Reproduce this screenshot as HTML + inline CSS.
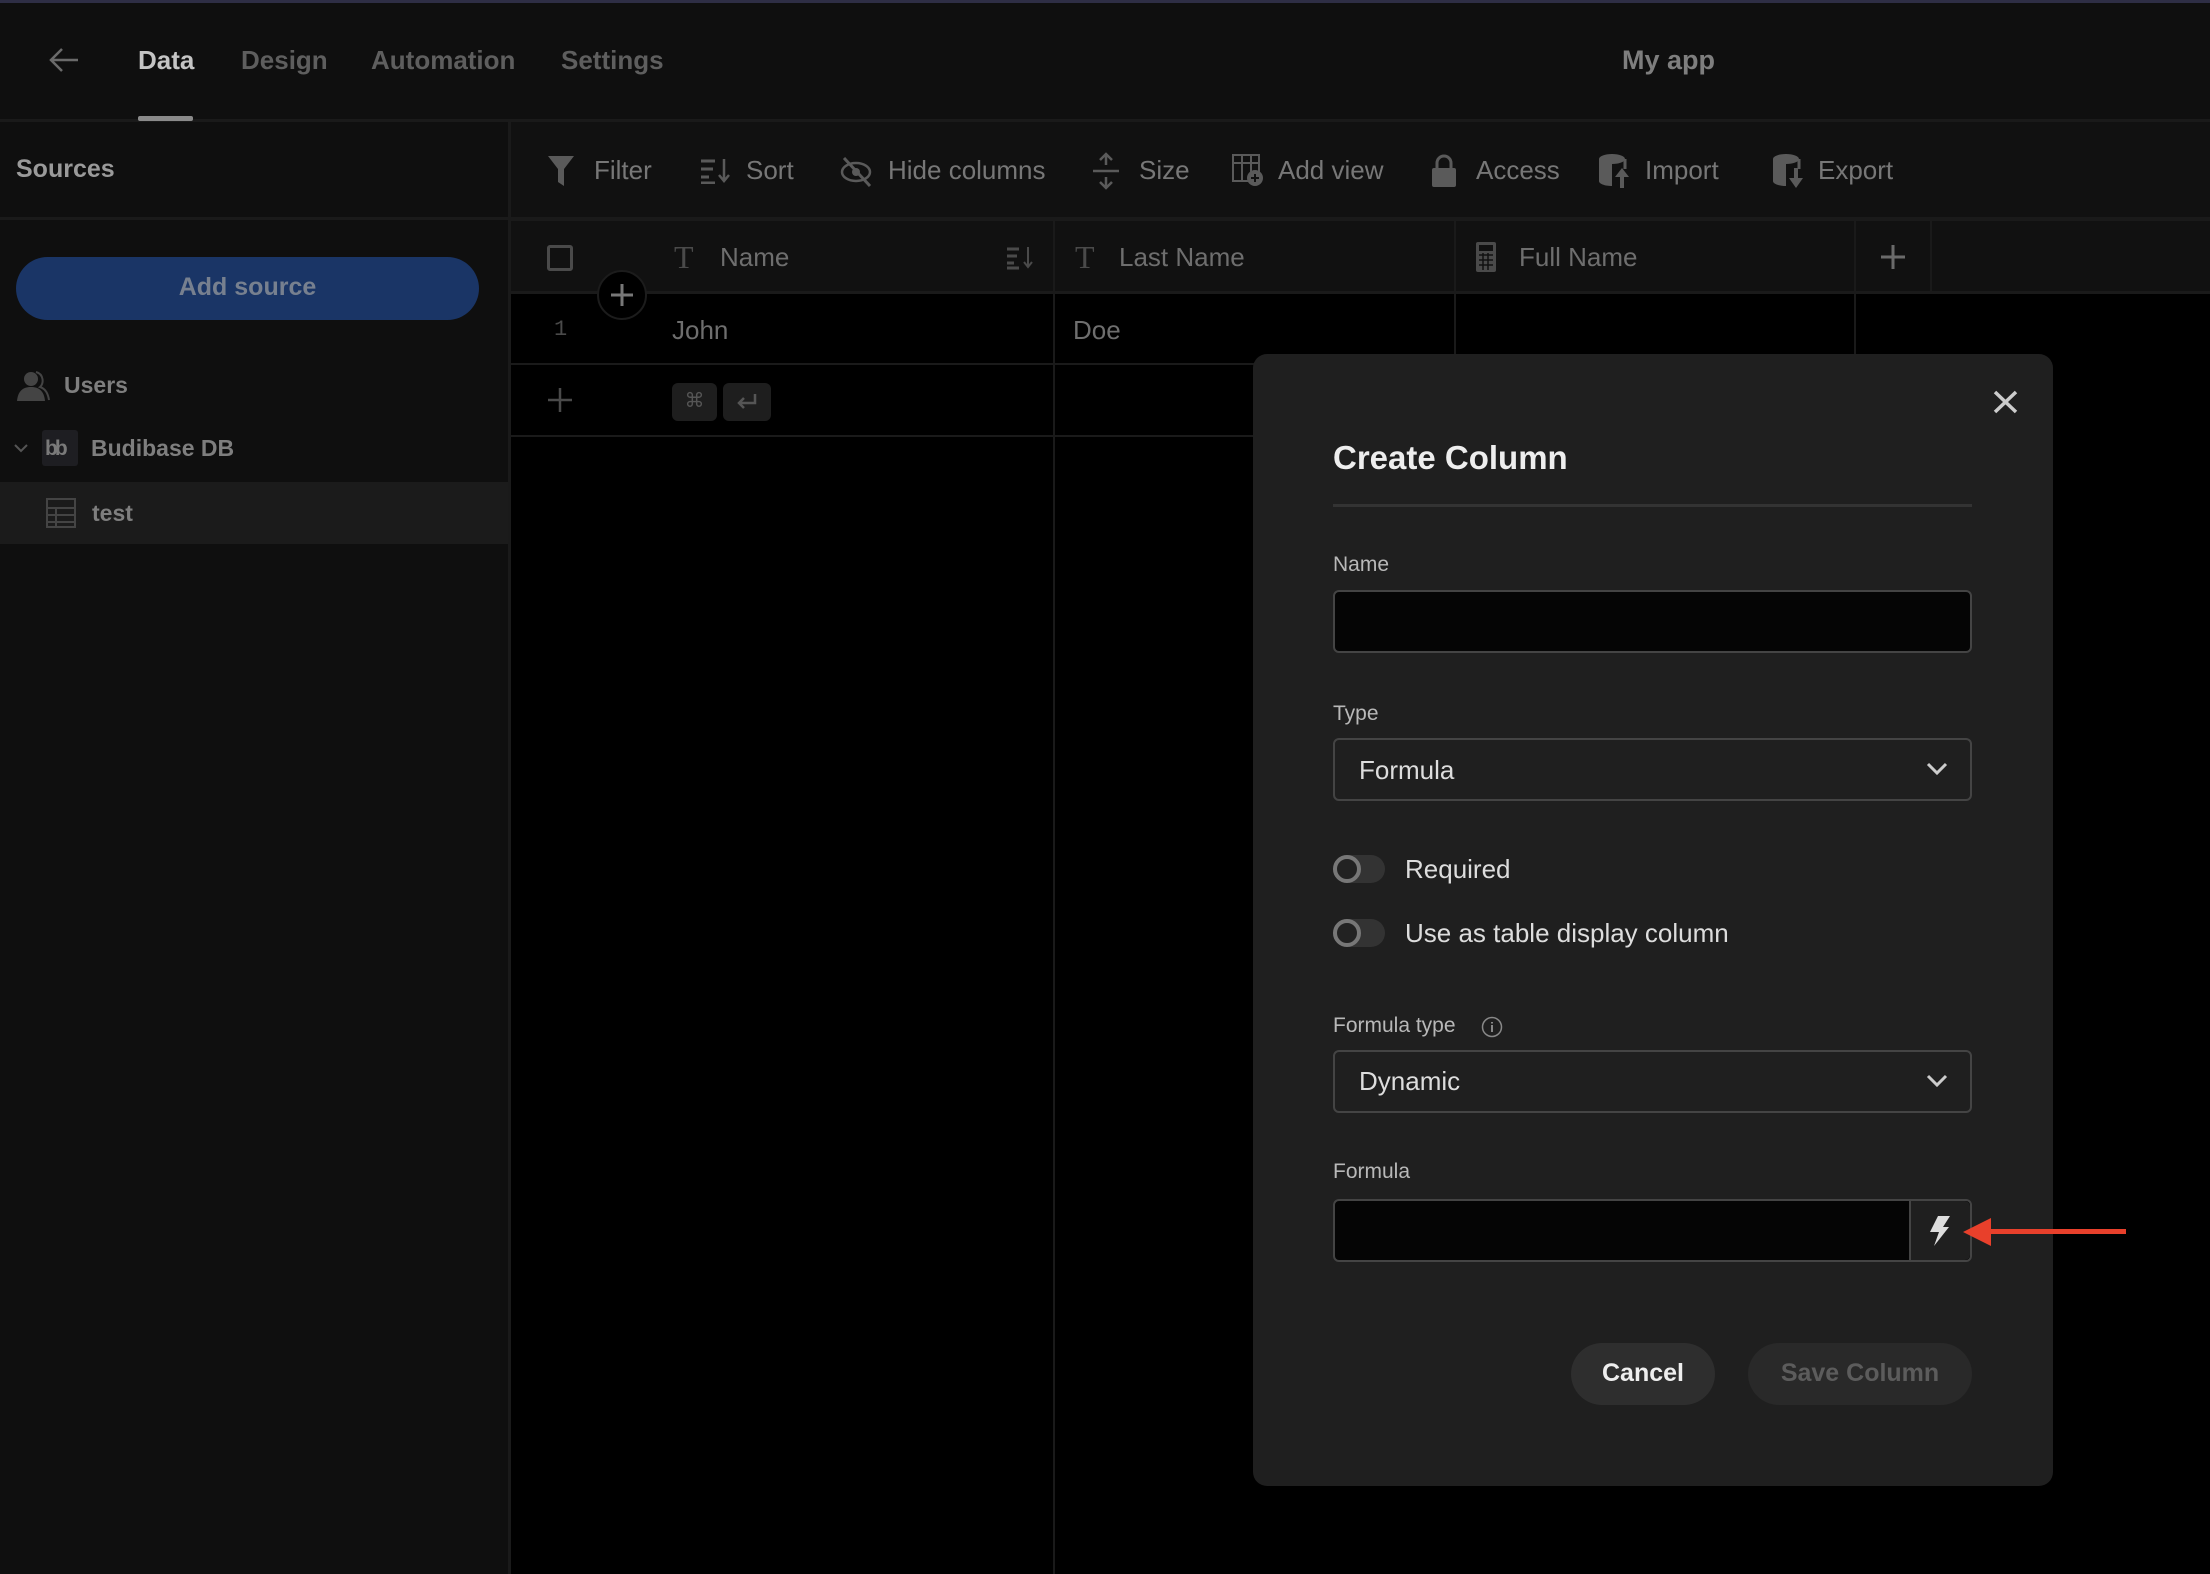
<!DOCTYPE html>
<html><head><meta charset="utf-8"><style>
*{box-sizing:border-box;margin:0;padding:0}
body{width:2210px;height:1574px;background:#000;font-family:"Liberation Sans",sans-serif;position:relative;overflow:hidden}
.a{position:absolute}
.t{position:absolute;white-space:nowrap;line-height:1}
</style></head><body>
<div class="a" style="left:0;top:0;width:2210px;height:3px;background:#2e2e45"></div>
<div class="a" style="left:0;top:3px;width:2210px;height:117px;background:#0f0f0f"></div>
<div class="a" style="left:0;top:119px;width:2210px;height:3px;background:#1a1a1a"></div>
<svg class="a" style="left:48px;top:46px" width="32" height="28" viewBox="0 0 32 28"><path d="M14 3 L3 14 L14 25 M3 14 H30" stroke="#6a6a6a" stroke-width="2.5" fill="none"/></svg>
<div class="t" style="left:138px;top:47px;font-size:26px;font-weight:bold;color:#c4c4c4">Data</div>
<div class="a" style="left:138px;top:116px;width:55px;height:5px;background:#8a8a8a;border-radius:2px"></div>
<div class="t" style="left:241px;top:47px;font-size:26px;font-weight:bold;color:#5e5e5e">Design</div>
<div class="t" style="left:371px;top:47px;font-size:26px;font-weight:bold;color:#5e5e5e">Automation</div>
<div class="t" style="left:561px;top:47px;font-size:26px;font-weight:bold;color:#5e5e5e">Settings</div>
<div class="t" style="left:1622px;top:47px;font-size:27px;font-weight:bold;color:#7e7e7e">My app</div>

<div class="a" style="left:0;top:122px;width:508px;height:1452px;background:#0f0f0f"></div>
<div class="a" style="left:508px;top:122px;width:3px;height:1452px;background:#1a1a1a"></div>
<div class="a" style="left:0;top:217px;width:510px;height:3px;background:#1a1a1a"></div>
<div class="t" style="left:16px;top:157px;font-size:25px;font-weight:bold;color:#9a9a9a">Sources</div>
<div class="a" style="left:16px;top:257px;width:463px;height:63px;background:#1a3566;border-radius:32px"></div>
<div class="t" style="left:16px;top:275px;width:463px;text-align:center;font-size:25px;font-weight:bold;color:#77808f">Add source</div>
<svg class="a" style="left:16px;top:370px" width="34" height="32" viewBox="0 0 34 32"><circle cx="15" cy="9" r="7" fill="#444"/><path d="M1 31 C2 20 8 17 15 17 C22 17 28 20 29 31Z" fill="#444"/><path d="M20 2 C28 4 28 14 24 17 C30 19 32 24 33 30" stroke="#444" stroke-width="2" fill="none"/></svg>
<div class="t" style="left:64px;top:374px;font-size:23px;font-weight:bold;color:#7e7e7e">Users</div>
<svg class="a" style="left:13px;top:442px" width="16" height="12" viewBox="0 0 16 12"><path d="M2 3 L8 9 L14 3" stroke="#555" stroke-width="2" fill="none"/></svg>
<div class="a" style="left:42px;top:430px;width:36px;height:36px;background:#1e1e22;border-radius:3px"></div>
<div class="t" style="left:45px;top:438px;font-size:21px;font-weight:bold;color:#7a7a7a;letter-spacing:-3px">bb</div>
<div class="t" style="left:91px;top:437px;font-size:23px;font-weight:bold;color:#7e7e7e">Budibase DB</div>
<div class="a" style="left:0;top:482px;width:508px;height:62px;background:#1b1b1b"></div>
<svg class="a" style="left:46px;top:498px" width="30" height="30" viewBox="0 0 30 30"><rect x="1" y="1" width="28" height="28" fill="none" stroke="#444" stroke-width="2"/><path d="M1 10H29M1 17H29M1 24H29M10 10V29" stroke="#444" stroke-width="2"/></svg>
<div class="t" style="left:92px;top:502px;font-size:23px;font-weight:bold;color:#7e7e7e">test</div>

<div class="a" style="left:511px;top:122px;width:1699px;height:95px;background:#111"></div>
<div class="a" style="left:511px;top:217px;width:1699px;height:4px;background:#1a1a1a"></div>
<div style="color:#777;font-size:26px">
<svg class="a" style="left:547px;top:155px" width="28" height="32" viewBox="0 0 28 32"><path d="M1 1H27L17 14V31L11 27V14Z" fill="#5a5a5a"/></svg>
<div class="t" style="left:594px;top:157px">Filter</div>
<svg class="a" style="left:700px;top:158px" width="30" height="26" viewBox="0 0 30 26"><path d="M1 3H15M1 11H13M1 19H9M1 25H15" stroke="#5a5a5a" stroke-width="3"/><path d="M24 1V22M19 17L24 23L29 17" stroke="#5a5a5a" stroke-width="2.5" fill="none"/></svg>
<div class="t" style="left:746px;top:157px">Sort</div>
<svg class="a" style="left:840px;top:155px" width="34" height="34" viewBox="0 0 34 34"><ellipse cx="16" cy="17" rx="14" ry="9" fill="none" stroke="#5a5a5a" stroke-width="2.5"/><circle cx="16" cy="17" r="4" fill="#5a5a5a"/><path d="M4 3L30 31" stroke="#5a5a5a" stroke-width="3"/></svg>
<div class="t" style="left:888px;top:157px">Hide columns</div>
<svg class="a" style="left:1092px;top:152px" width="28" height="38" viewBox="0 0 28 38"><path d="M1 19H27M14 3V13M14 25V35M8 8L14 2L20 8M8 30L14 36L20 30" stroke="#5a5a5a" stroke-width="2.5" fill="none"/></svg>
<div class="t" style="left:1139px;top:157px">Size</div>
<svg class="a" style="left:1232px;top:154px" width="32" height="34" viewBox="0 0 32 34"><rect x="1" y="1" width="26" height="26" fill="none" stroke="#5a5a5a" stroke-width="2"/><path d="M1 9H27M10 1V27M19 1V18" stroke="#5a5a5a" stroke-width="2"/><circle cx="23" cy="24" r="8" fill="#5a5a5a"/><path d="M23 20V28M19 24H27" stroke="#111" stroke-width="2"/></svg>
<div class="t" style="left:1278px;top:157px">Add view</div>
<svg class="a" style="left:1431px;top:154px" width="26" height="34" viewBox="0 0 26 34"><path d="M6 14V9A7 7 0 0 1 20 9V14" stroke="#5a5a5a" stroke-width="3" fill="none"/><rect x="1" y="14" width="24" height="19" rx="2" fill="#5a5a5a"/></svg>
<div class="t" style="left:1476px;top:157px">Access</div>
<svg class="a" style="left:1598px;top:153px" width="32" height="36" viewBox="0 0 32 36"><ellipse cx="14" cy="6" rx="13" ry="5" fill="#5a5a5a"/><path d="M1 6V28C1 31 7 33 14 33V6Z" fill="#5a5a5a"/><path d="M27 6V16" stroke="#5a5a5a" stroke-width="3"/><path d="M22 35V24H17L24 15L31 24H26V35Z" fill="#5a5a5a"/></svg>
<div class="t" style="left:1645px;top:157px">Import</div>
<svg class="a" style="left:1772px;top:153px" width="32" height="36" viewBox="0 0 32 36"><ellipse cx="14" cy="6" rx="13" ry="5" fill="#5a5a5a"/><path d="M1 6V28C1 31 7 33 14 33V6Z" fill="#5a5a5a"/><path d="M27 6V16" stroke="#5a5a5a" stroke-width="3"/><path d="M22 15V25H17L24 35L31 25H26V15Z" fill="#5a5a5a"/></svg>
<div class="t" style="left:1818px;top:157px">Export</div>
</div>

<div class="a" style="left:511px;top:221px;width:1699px;height:72px;background:#111"></div>
<div class="a" style="left:511px;top:291px;width:1699px;height:3px;background:#1a1a1a"></div>
<div class="a" style="left:1053px;top:221px;width:2px;height:1353px;background:#1a1a1a"></div>
<div class="a" style="left:1454px;top:221px;width:2px;height:216px;background:#1a1a1a"></div>
<div class="a" style="left:1854px;top:221px;width:2px;height:216px;background:#1a1a1a"></div>
<div class="a" style="left:1930px;top:221px;width:2px;height:72px;background:#1a1a1a"></div>
<div class="a" style="left:547px;top:245px;width:26px;height:26px;border:3px solid #4a4a4a;border-radius:3px"></div>
<div style="color:#6e6e6e;font-size:26px">
<div class="t" style="left:674px;top:241px;font-family:'Liberation Serif',serif;font-size:32px;color:#4a4a4a">T</div>
<div class="t" style="left:720px;top:244px">Name</div>
<svg class="a" style="left:1006px;top:246px" width="28" height="24" viewBox="0 0 28 24"><path d="M1 3H13M1 10H11M1 17H8M1 22H13" stroke="#4a4a4a" stroke-width="3"/><path d="M22 1V20M18 16L22 21L26 16" stroke="#4a4a4a" stroke-width="2" fill="none"/></svg>
<div class="t" style="left:1075px;top:241px;font-family:'Liberation Serif',serif;font-size:32px;color:#4a4a4a">T</div>
<div class="t" style="left:1119px;top:244px">Last Name</div>
<svg class="a" style="left:1475px;top:241px" width="22" height="32" viewBox="0 0 22 32"><rect x="1" y="1" width="20" height="30" rx="2" fill="#4a4a4a"/><rect x="4" y="4" width="14" height="6" fill="#111"/><path d="M4 14H18M4 19H18M4 24H18M8 12V29M13 12V29" stroke="#111" stroke-width="1.5"/></svg>
<div class="t" style="left:1519px;top:244px">Full Name</div>
<svg class="a" style="left:1880px;top:244px" width="26" height="26" viewBox="0 0 26 26"><path d="M13 1V25M1 13H25" stroke="#6a6a6a" stroke-width="3"/></svg>
<div class="a" style="left:511px;top:363px;width:1343px;height:2px;background:#1a1a1a"></div>
<div class="a" style="left:511px;top:435px;width:1343px;height:2px;background:#1a1a1a"></div>
<div class="t" style="left:554px;top:319px;font-size:22px;color:#4a4a4a;font-family:'Liberation Mono',monospace">1</div>
<div class="t" style="left:672px;top:317px">John</div>
<div class="t" style="left:1073px;top:317px">Doe</div>
<svg class="a" style="left:547px;top:387px" width="26" height="26" viewBox="0 0 26 26"><path d="M13 1V25M1 13H25" stroke="#4a4a4a" stroke-width="2.5"/></svg>
<div class="a" style="left:672px;top:383px;width:45px;height:38px;background:#1e1e1e;border-radius:6px"></div>
<div class="t" style="left:672px;top:391px;width:45px;text-align:center;font-size:20px;color:#555">⌘</div>
<div class="a" style="left:723px;top:383px;width:48px;height:38px;background:#1e1e1e;border-radius:6px"></div>
<svg class="a" style="left:736px;top:393px" width="22" height="18" viewBox="0 0 22 18"><path d="M19 1V10H3M8 5L3 10L8 15" stroke="#555" stroke-width="2.5" fill="none"/></svg>
<div class="a" style="left:597px;top:270px;width:50px;height:50px;border-radius:50%;background:#000;border:2px solid #1c1c1c"></div>
<svg class="a" style="left:608px;top:281px" width="28" height="28" viewBox="0 0 28 28"><path d="M14 3V25M3 14H25" stroke="#777" stroke-width="3"/></svg>
</div>

<div class="a" style="left:1253px;top:354px;width:800px;height:1132px;background:#1f1f1f;border-radius:14px"></div>
<svg class="a" style="left:1993px;top:390px" width="25" height="24" viewBox="0 0 25 24"><path d="M2 2L23 22M23 2L2 22" stroke="#ccc" stroke-width="3.5"/></svg>
<div class="t" style="left:1333px;top:441px;font-size:33px;font-weight:bold;color:#eee">Create Column</div>
<div class="a" style="left:1333px;top:504px;width:639px;height:3px;background:#333"></div>
<div style="color:#b8b8b8;font-size:21px">
<div class="t" style="left:1333px;top:554px">Name</div>
<div class="t" style="left:1333px;top:703px">Type</div>
<div class="t" style="left:1333px;top:1015px">Formula type</div>
<div class="t" style="left:1333px;top:1161px">Formula</div>
</div>
<svg class="a" style="left:1481px;top:1016px" width="22" height="22" viewBox="0 0 22 22"><circle cx="11" cy="11" r="9.5" fill="none" stroke="#888" stroke-width="1.5"/><path d="M11 9V16M11 6V7.5" stroke="#888" stroke-width="2"/></svg>
<div class="a" style="left:1333px;top:590px;width:639px;height:63px;background:#050505;border:2px solid #444;border-radius:6px"></div>
<div class="a" style="left:1333px;top:738px;width:639px;height:63px;background:#1f1f1f;border:2px solid #444;border-radius:6px"></div>
<div class="t" style="left:1359px;top:757px;font-size:26px;color:#ddd">Formula</div>
<svg class="a" style="left:1926px;top:762px" width="22" height="14" viewBox="0 0 22 14"><path d="M2 2L11 11L20 2" stroke="#ccc" stroke-width="3" fill="none"/></svg>
<div class="a" style="left:1333px;top:855px;width:52px;height:28px;background:#333;border-radius:14px"></div>
<div class="a" style="left:1333px;top:855px;width:28px;height:28px;border:4px solid #777;border-radius:50%;background:#222"></div>
<div class="t" style="left:1405px;top:856px;font-size:26px;color:#ddd">Required</div>
<div class="a" style="left:1333px;top:919px;width:52px;height:28px;background:#333;border-radius:14px"></div>
<div class="a" style="left:1333px;top:919px;width:28px;height:28px;border:4px solid #777;border-radius:50%;background:#222"></div>
<div class="t" style="left:1405px;top:920px;font-size:26px;color:#ddd">Use as table display column</div>
<div class="a" style="left:1333px;top:1050px;width:639px;height:63px;background:#1f1f1f;border:2px solid #444;border-radius:6px"></div>
<div class="t" style="left:1359px;top:1068px;font-size:26px;color:#ddd">Dynamic</div>
<svg class="a" style="left:1926px;top:1074px" width="22" height="14" viewBox="0 0 22 14"><path d="M2 2L11 11L20 2" stroke="#ccc" stroke-width="3" fill="none"/></svg>
<div class="a" style="left:1333px;top:1199px;width:639px;height:63px;background:#050505;border:2px solid #444;border-radius:6px"></div>
<div class="a" style="left:1909px;top:1201px;width:61px;height:59px;background:#1f1f1f;border-left:2px solid #444;border-radius:0 5px 5px 0"></div>
<svg class="a" style="left:1929px;top:1215px" width="22" height="32" viewBox="0 0 22 32"><path d="M9 1H21L14 12H20L5 31L10 17H1Z" fill="#ddd"/></svg>
<div class="a" style="left:1986px;top:1229px;width:140px;height:5px;background:#e8402b"></div>
<svg class="a" style="left:1962px;top:1217px" width="30" height="30" viewBox="0 0 30 30"><path d="M1 15L29 1V29Z" fill="#e8402b"/></svg>
<div class="a" style="left:1571px;top:1343px;width:144px;height:62px;background:#2e2e2e;border-radius:31px"></div>
<div class="t" style="left:1571px;top:1361px;width:144px;text-align:center;font-size:25px;font-weight:bold;color:#eee">Cancel</div>
<div class="a" style="left:1748px;top:1343px;width:224px;height:62px;background:#292929;border-radius:31px"></div>
<div class="t" style="left:1748px;top:1361px;width:224px;text-align:center;font-size:25px;font-weight:bold;color:#5c5c5c">Save Column</div>
</body></html>
